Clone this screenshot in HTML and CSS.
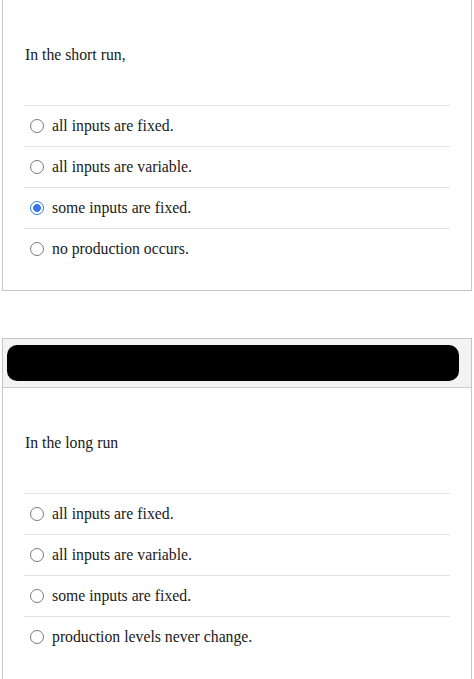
FILE: index.html
```html
<!DOCTYPE html>
<html lang="en">
<head>
<meta charset="utf-8">
<title>Quiz</title>
<link rel="stylesheet" href="styles.css">
</head>
<body>
<div class="card card-first">
  <div class="card-body">
    <p class="question">In the short run,</p>
    <ul class="options">
      <li class="option"><span class="radio"></span><span>all inputs are fixed.</span></li>
      <li class="option"><span class="radio"></span><span>all inputs are variable.</span></li>
      <li class="option"><span class="radio checked"></span><span>some inputs are fixed.</span></li>
      <li class="option"><span class="radio"></span><span>no production occurs.</span></li>
    </ul>
  </div>
</div>
<div class="card card-next">
  <div class="card-head"><div class="redact"></div></div>
  <div class="card-body card-body-last">
    <p class="question">In the long run</p>
    <ul class="options">
      <li class="option"><span class="radio"></span><span>all inputs are fixed.</span></li>
      <li class="option"><span class="radio"></span><span>all inputs are variable.</span></li>
      <li class="option"><span class="radio"></span><span>some inputs are fixed.</span></li>
      <li class="option"><span class="radio"></span><span>production levels never change.</span></li>
    </ul>
  </div>
</div>
</body>
</html>
```
FILE: styles.css
```css
html, body {
  margin: 0;
  padding: 0;
  background: #ffffff;
}
body {
  font-family: "Liberation Serif", "Times New Roman", serif;
  font-size: 15.75px;
  color: #1a1a1a;
  overflow: hidden;
}
.card {
  border: 1px solid #c6c6c6;
  margin: 0 2px;
  background: #ffffff;
}
.card-first {
  margin-top: -1px;
}
.card-next {
  margin-top: 47px;
}
.card-head {
  background: #f3f3f3;
  padding: 6px 12px 6px 4px;
  border-bottom: 1px solid #cacaca;
}
.redact {
  height: 36px;
  background: #000000;
  border-radius: 10px;
}
.card-body {
  padding: 45px 21px 21px 21px;
}
.card-body-last {
  padding-bottom: 30px;
}
.question {
  margin: 0 0 40px 1px;
  line-height: 20px;
}
.options {
  list-style: none;
  margin: 0;
  padding: 0;
}
.option {
  display: flex;
  align-items: center;
  height: 40px;
  border-top: 1px solid #e2e2e2;
  line-height: 20px;
}
.radio {
  box-sizing: border-box;
  width: 14px;
  height: 14px;
  border: 1px solid #7a7a7a;
  border-radius: 50%;
  margin: 0 8px 0 6px;
  flex: none;
  background: #fff;
}
.radio.checked {
  border: 1.5px solid #3478f6;
  background: radial-gradient(circle, #3478f6 0 3.6px, #ffffff 4.2px);
}
```
